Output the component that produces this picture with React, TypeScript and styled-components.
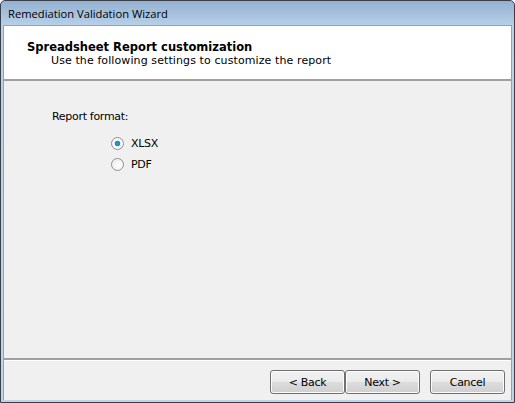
import styled, { createGlobalStyle } from 'styled-components';

const GlobalStyle = createGlobalStyle`
  html, body {
    margin: 0;
    padding: 0;
    background: #ffffff;
  }
  body {
    font-family: "DejaVu Sans", Tahoma, sans-serif;
  }
`;

function Radio({ label, checked }: { label: string; checked?: boolean }) {
  return (
    <RadioRow>
      <RadioCircle checked={checked} />
      <RadioLabel>{label}</RadioLabel>
    </RadioRow>
  );
}

export default function App() {
  return (
    <>
      <GlobalStyle />
      <Window>
        <TitleBar>Remediation Validation Wizard</TitleBar>
        <Client>
          <HeaderPanel>
            <HeaderTitle>Spreadsheet Report customization</HeaderTitle>
            <HeaderSub>Use the following settings to customize the report</HeaderSub>
          </HeaderPanel>
          <Body>
            <FieldLabel>Report format:</FieldLabel>
            <RadioGroup>
              <Radio label="XLSX" checked />
              <Radio label="PDF" />
            </RadioGroup>
          </Body>
          <Footer>
            <ButtonPair>
              <Button>&lt; Back</Button>
              <Button>Next &gt;</Button>
            </ButtonPair>
            <Button>Cancel</Button>
          </Footer>
        </Client>
      </Window>
    </>
  );
}

const Window = styled.div`
  width: 515px;
  height: 403px;
  box-sizing: border-box;
  display: flex;
  flex-direction: column;
  border: 1px solid #3a3f47;
  border-radius: 5px 5px 0 0;
  background: linear-gradient(to bottom, #94b1d1 0px, #b9d1ea 25px, #bcd4ec 100%);
  padding: 0 2px 2px 2px;
  overflow: hidden;
`;

const TitleBar = styled.div`
  height: 24px;
  flex: none;
  display: flex;
  align-items: center;
  padding-left: 5px;
  font-family: "Open Sans", "Noto Sans", sans-serif;
  font-size: 11.2px;
  color: #000000;
`;

const Client = styled.div`
  flex: 1;
  display: flex;
  flex-direction: column;
  background: #f0f0f0;
  border: 1px solid #8ea4bd;
  border-bottom: none;
  min-height: 0;
`;

const HeaderPanel = styled.div`
  height: 55px;
  flex: none;
  background: #ffffff;
  border-bottom: 2px solid #a0a0a0;
  padding: 15px 0 0 23px;
  box-sizing: border-box;
`;

const HeaderTitle = styled.div`
  font-weight: bold;
  font-size: 11.5px;
  color: #000000;
  line-height: 13px;
`;

const HeaderSub = styled.div`
  font-size: 11px;
  color: #000000;
  line-height: 13px;
  padding-left: 24px;
  letter-spacing: 0.1px;
`;

const Body = styled.div`
  flex: 1;
  padding: 29px 0 0 48px;
  font-family: Tahoma, "DejaVu Sans", sans-serif;
`;

const FieldLabel = styled.div`
  font-size: 11px;
  color: #000000;
  letter-spacing: -0.3px;
  margin-bottom: 14px;
`;

const RadioGroup = styled.div`
  display: flex;
  flex-direction: column;
  gap: 8px;
  padding-left: 59px;
`;

const RadioRow = styled.div`
  display: flex;
  align-items: center;
  gap: 7px;
  height: 13px;
`;

const RadioCircle = styled.span<{ checked?: boolean }>`
  width: 11px;
  height: 11px;
  border-radius: 50%;
  border: 1px solid #8f8f8f;
  background: ${p =>
    p.checked
      ? 'radial-gradient(circle, #1aa0e0 0, #1589c8 2.5px, #ffffff 3.2px, #f2f2f2 100%)'
      : 'radial-gradient(circle at 60% 60%, #ffffff 0, #f4f4f4 45%, #d8d8d8 100%)'};
  box-shadow: inset 0 0 0 1px #f6f6f6;
`;

const RadioLabel = styled.span`
  font-size: 11px;
  color: #000000;
  letter-spacing: -0.3px;
`;

const Footer = styled.div`
  height: 40px;
  flex: none;
  display: flex;
  align-items: center;
  justify-content: flex-end;
  gap: 10px;
  padding-right: 6px;
  border-top: 2px solid #a0a0a0;
  box-shadow: inset 0 1px 0 #ffffff;
`;

const ButtonPair = styled.div`
  display: flex;
`;

const Button = styled.button`
  width: 75px;
  height: 24px;
  border: 1px solid #707070;
  border-radius: 3px;
  background: linear-gradient(to bottom, #f2f2f2 0%, #ebebeb 50%, #dddddd 51%, #cfcfcf 100%);
  box-shadow: inset 0 0 0 1px #fcfcfc;
  font-family: Tahoma, "DejaVu Sans", sans-serif;
  font-size: 11px;
  letter-spacing: -0.3px;
  color: #000000;
  padding: 0;
  margin-top: 4px;
`;
